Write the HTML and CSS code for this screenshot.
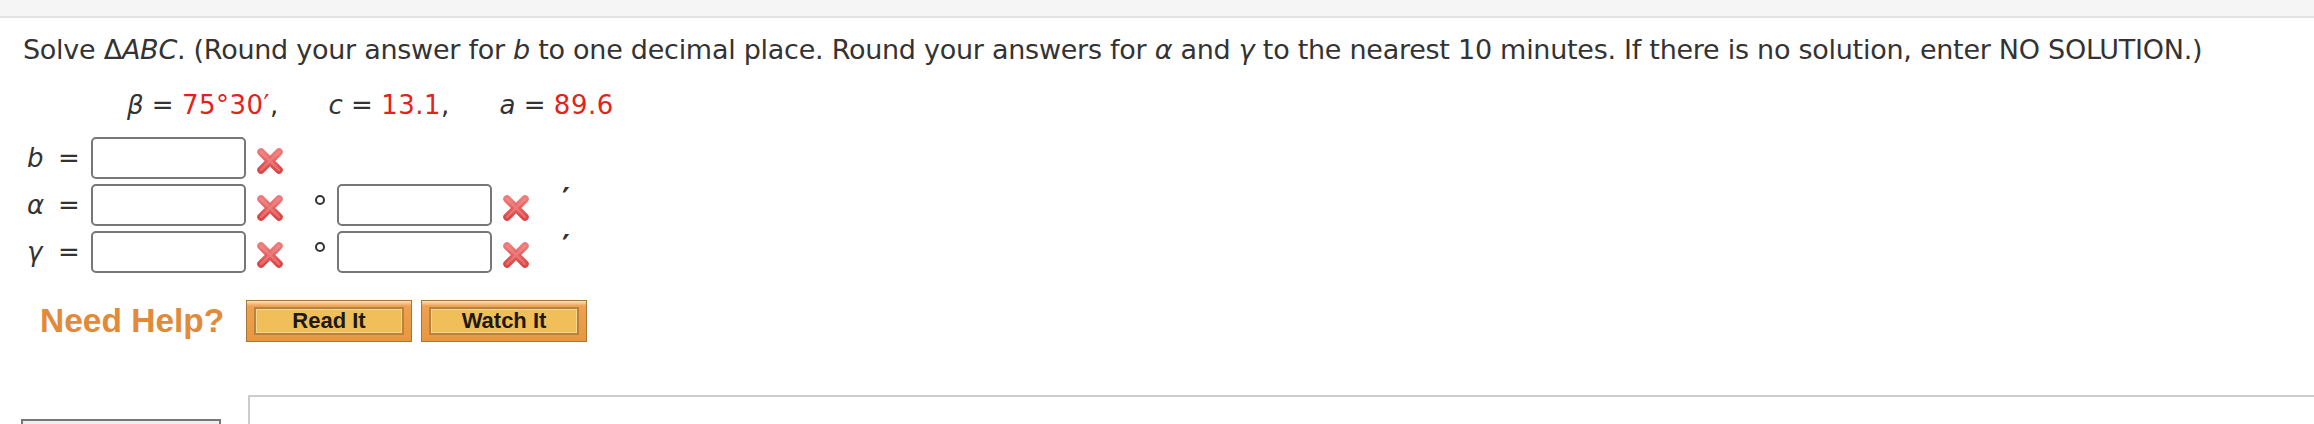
FILE: index.html
```html
<!DOCTYPE html>
<html>
<head>
<meta charset="utf-8">
<link rel="stylesheet" href="styles.css">
</head>
<body>
<div class="topbar"></div>
<div class="question">
  <p class="prompt">Solve Δ<i>ABC</i>. (Round your answer for <i>b</i> to one decimal place. Round your answers for <i>α</i> and <i>γ</i> to the nearest 10 minutes. If there is no solution, enter NO SOLUTION.)</p>
  <p class="given">
    <span class="term"><i>β</i> = <span class="red">75°30′</span>,</span>
    <span class="term"><i>c</i> = <span class="red">13.1</span>,</span>
    <span class="term"><i>a</i> = <span class="red">89.6</span></span>
  </p>
  <div class="answers">
    <div class="row">
      <span class="var"><i>b</i></span><span class="eq">=</span>
      <span class="box"></span>
      <svg class="x" viewBox="0 0 26 26"><use href="#xmark"/></svg>
    </div>
    <div class="row">
      <span class="var"><i>α</i></span><span class="eq">=</span>
      <span class="box"></span>
      <svg class="x" viewBox="0 0 26 26"><use href="#xmark"/></svg>
      <span class="deg"></span>
      <span class="box box2"></span>
      <svg class="x" viewBox="0 0 26 26"><use href="#xmark"/></svg>
      <span class="prime">′</span>
    </div>
    <div class="row">
      <span class="var"><i>γ</i></span><span class="eq">=</span>
      <span class="box"></span>
      <svg class="x" viewBox="0 0 26 26"><use href="#xmark"/></svg>
      <span class="deg"></span>
      <span class="box box2"></span>
      <svg class="x" viewBox="0 0 26 26"><use href="#xmark"/></svg>
      <span class="prime">′</span>
    </div>
  </div>
  <div class="help">
    <span class="need">Need Help?</span>
    <span class="btn"><span class="btn-in">Read It</span></span>
    <span class="btn"><span class="btn-in">Watch It</span></span>
  </div>
</div>
<div class="bottom">
  <div class="left-box"></div>
  <div class="right-box"></div>
</div>
<svg width="0" height="0" class="defs">
  <defs>
    <linearGradient id="xg" x1="0" y1="0" x2="0" y2="1">
      <stop offset="0" stop-color="#ee7a7a"/>
      <stop offset="1" stop-color="#dc4545"/>
    </linearGradient>
    <g id="xmark">
      <path d="M4 4 L22 22 M22 4 L4 22" stroke="url(#xg)" stroke-width="7.5" stroke-linecap="round" fill="none"/>
      <path d="M4 4 L22 22 M22 4 L4 22" stroke="#f29a9a" stroke-opacity="0.45" stroke-width="2.5" stroke-linecap="round" fill="none"/>
    </g>
  </defs>
</svg>
</body>
</html>
```
FILE: styles.css
```css
html, body {
  margin: 0;
  padding: 0;
  background: #fff;
  overflow: hidden;
}
body {
  font-family: "DejaVu Sans", Verdana, sans-serif;
  color: #333;
}
.defs {
  position: absolute;
}
.topbar {
  height: 16px;
  background: #f5f5f5;
  border-bottom: 2px solid #e2e2e2;
}
.question {
  padding-left: 23px;
}
.prompt {
  margin: 15px 0 0 0;
  font-size: 27px;
  letter-spacing: -0.27px;
  line-height: 34px;
  white-space: nowrap;
}
.given {
  margin: 22px 0 0 0;
  padding-left: 104px;
  font-size: 26px;
  line-height: 32px;
  white-space: nowrap;
}
.term {
  margin-right: 42px;
}
.red {
  color: #e2231a;
  letter-spacing: 0.5px;
}
.answers {
  margin-top: 16px;
  display: flex;
  flex-direction: column;
  gap: 5px;
  padding-left: 4px;
}
.row {
  display: flex;
  align-items: flex-start;
  height: 42px;
  font-size: 26px;
}
.var {
  width: 31px;
  line-height: 42px;
}
.eq {
  width: 33px;
  line-height: 42px;
}
.box {
  box-sizing: border-box;
  width: 155px;
  height: 42px;
  border: 2px solid #777;
  border-radius: 5px;
  background: #fff;
}
.x {
  width: 26px;
  height: 26px;
  margin-left: 11px;
  margin-top: 11px;
}
.deg {
  box-sizing: border-box;
  width: 10px;
  height: 10px;
  border: 2.5px solid #333;
  border-radius: 50%;
  margin-left: 32px;
  margin-top: 11px;
}
.box2 {
  margin-left: 12px;
}
.prime {
  margin-left: 33px;
  line-height: 30px;
  font-size: 30px;
  font-weight: bold;
}
.help {
  margin-top: 27px;
  display: flex;
  align-items: center;
  padding-left: 17px;
}
.need {
  font-family: "Liberation Sans", Arial, sans-serif;
  font-weight: bold;
  font-size: 33.5px;
  color: #e2893a;
  width: 206px;
}
.btn {
  box-sizing: border-box;
  width: 166px;
  height: 42px;
  margin-right: 9px;
  padding: 6px 7px;
  border: 1px solid #a7763a;
  background: linear-gradient(#f9e2c2 0, #eea151 5px, #e9973e 100%);
  display: flex;
}
.btn-in {
  flex: 1;
  box-sizing: border-box;
  border: 2px solid #b8823f;
  box-shadow: inset 0 0 0 1px #f6d68e;
  background: #f1bf5a;
  font-family: "Liberation Sans", Arial, sans-serif;
  font-weight: bold;
  font-size: 22px;
  color: #1e1a12;
  display: flex;
  align-items: center;
  justify-content: center;
}
.bottom {
  margin-top: 53px;
  display: flex;
  align-items: flex-start;
  padding-left: 21px;
}
.left-box {
  box-sizing: border-box;
  width: 200px;
  height: 40px;
  margin-top: 24px;
  border: 2px solid #777;
  background: #eee;
}
.right-box {
  flex: 1;
  height: 60px;
  margin-left: 27px;
  border-top: 2px solid #ccc;
  border-left: 2px solid #ccc;
}
```
